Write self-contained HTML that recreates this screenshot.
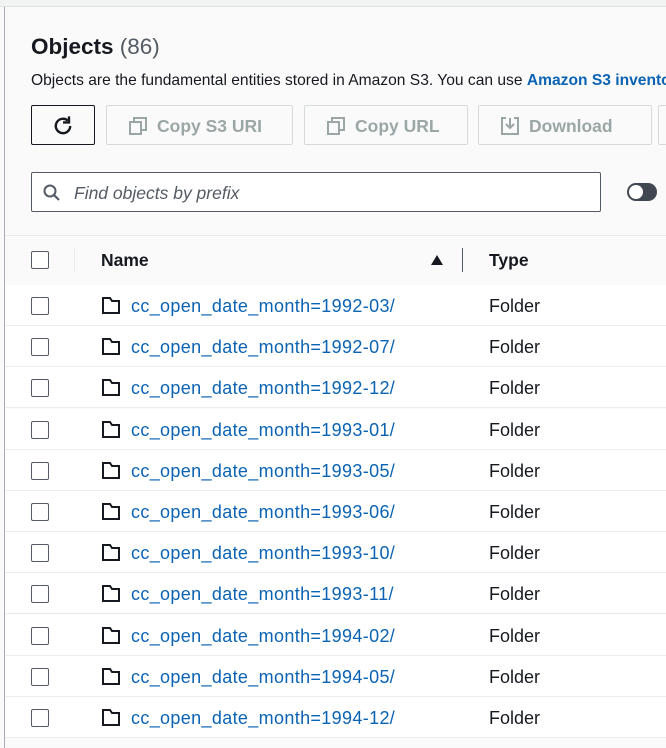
<!DOCTYPE html>
<html><head><style>
body{margin:0;width:666px;height:748px;overflow:hidden;background:#fafafa;font-family:"Liberation Sans",sans-serif;color:#16191f;position:relative}
.top{position:absolute;left:0;top:0;width:666px;height:6px;background:#f2f3f3;border-bottom:1px solid #e0e0e0}
.lb{position:absolute;left:4px;top:7px;width:1px;height:741px;background:#aab}
.h{position:absolute;left:31px;top:34px;font-size:22.5px;font-weight:bold}
.h span{font-weight:normal;color:#545b64}
.d{position:absolute;left:31px;top:72px;font-size:15.6px;white-space:nowrap;color:#16191f}
.d b{color:#0b63b3}
.btn{position:absolute;top:105px;height:38px;border:1px solid #d5dbdb;border-radius:2px;background:#fafafa;color:#9ba7a6;font-weight:bold;font-size:17.5px;line-height:40px;box-sizing:content-box;white-space:nowrap}
.btn svg{vertical-align:-3px;margin-right:10px}
.search{position:absolute;left:31px;top:172px;width:568px;height:38px;border:1px solid #545b64;border-radius:2px;background:#fff;font-size:17.5px;font-style:italic;color:#545b64;line-height:41px}
.tg{position:absolute;left:627px;top:183px;width:30px;height:18px;border-radius:9px;background:#414750}
.tg:after{content:"";position:absolute;left:2px;top:2px;width:14px;height:14px;border-radius:7px;background:#fff}
.hdr{position:absolute;left:5px;top:235px;width:661px;height:49px;border-top:1px solid #eaeded;border-bottom:1px solid #eaeded;background:#fafafa}
.cb{position:absolute;left:31px;width:16px;height:16px;border:1px solid #545b64;border-radius:2px;background:#fff}
.row{position:absolute;left:5px;width:661px;height:40px;border-bottom:1px solid #eaeded;background:#fff}
.row .cb{left:26px;top:12px}
.lk{position:absolute;left:126px;top:11px;font-size:18px;letter-spacing:0.35px;color:#0b63b3}
.ty{position:absolute;left:484px;top:11px;font-size:18px}
.fi{position:absolute;left:97px;top:12px}
</style></head><body>
<div class="top"></div><div class="lb"></div>
<div class="h">Objects <span>(86)</span></div>
<div class="d">Objects are the fundamental entities stored in Amazon S3. You can use <b>Amazon S3 inventory</b></div>
<div class="btn" style="left:31px;width:62px;border-color:#16191f;color:#16191f;text-align:center"><svg width="24" height="24" viewBox="0 0 20 20" style="margin:0;vertical-align:-6px"><path d="M16 10a6 6 0 1 1-2-4.5" fill="none" stroke="#16191f" stroke-width="2"/><path d="M15 2v5h-5" fill="none" stroke="#16191f" stroke-width="2"/></svg></div>
<div class="btn" style="left:106px;width:185px"><span style="margin-left:22px"><svg width="18" height="18" viewBox="0 0 18 18"><rect x="1" y="5" width="11" height="12" fill="none" stroke="#9ba7a6" stroke-width="2"/><path d="M5 5V1h12v12h-5" fill="none" stroke="#9ba7a6" stroke-width="2"/></svg>Copy S3 URI</span></div>
<div class="btn" style="left:304px;width:162px"><span style="margin-left:22px"><svg width="18" height="18" viewBox="0 0 18 18"><rect x="1" y="5" width="11" height="12" fill="none" stroke="#9ba7a6" stroke-width="2"/><path d="M5 5V1h12v12h-5" fill="none" stroke="#9ba7a6" stroke-width="2"/></svg>Copy URL</span></div>
<div class="btn" style="left:478px;width:172px"><span style="margin-left:22px"><svg width="18" height="18" viewBox="0 0 18 18"><path d="M5 1H1v16h16V1h-4M9 1v10M5 7l4 4 4-4" fill="none" stroke="#9ba7a6" stroke-width="2"/></svg>Download</span></div>
<div class="btn" style="left:658px;width:40px"></div>
<div class="search"><svg width="18" height="18" viewBox="0 0 18 18" style="position:absolute;left:11px;top:11px"><circle cx="7" cy="7" r="5.5" fill="none" stroke="#545b64" stroke-width="2"/><path d="M11 11l5 5" stroke="#545b64" stroke-width="2.2"/></svg><span style="position:absolute;left:42px">Find objects by prefix</span></div>
<div class="tg"></div>
<div class="hdr">
<div class="cb" style="left:26px;top:15px"></div>
<div style="position:absolute;left:69px;top:12px;width:1px;height:24px;background:#eaeded"></div>
<div style="position:absolute;left:96px;top:14px;font-size:17.5px;font-weight:bold">Name</div>
<div style="position:absolute;left:426px;top:19px;width:0;height:0;border-left:6px solid transparent;border-right:6px solid transparent;border-bottom:10px solid #16191f"></div>
<div style="position:absolute;left:457px;top:12px;width:1px;height:24px;background:#545b64"></div>
<div style="position:absolute;left:484px;top:14px;font-size:17.5px;font-weight:bold">Type</div>
</div>
<div id="rows"></div>
<script>
var n=["1992-03","1992-07","1992-12","1993-01","1993-05","1993-06","1993-10","1993-11","1994-02","1994-05","1994-12"],h="";
n.forEach(function(x,i){var t=285+i*41.2;h+='<div class="row" style="top:'+t+'px"><div class="cb"></div><svg class="fi" width="18" height="17" viewBox="0 0 18 17"><path d="M1 1h7l2 3h7v12H1z" fill="none" stroke="#16191f" stroke-width="2"/></svg><div class="lk">cc_open_date_month='+x+'/</div><div class="ty">Folder</div></div>'});
document.getElementById("rows").innerHTML=h;
</script>
</body></html>
